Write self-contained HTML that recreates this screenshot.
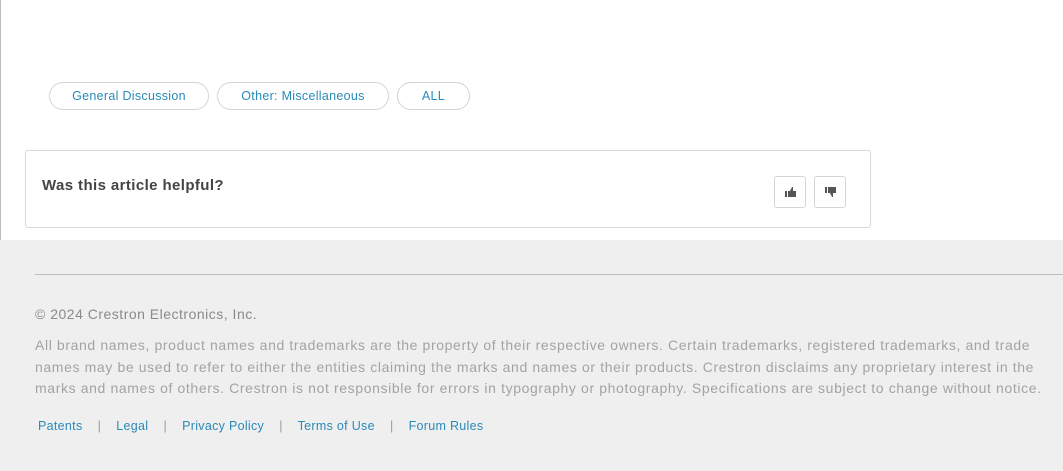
<!DOCTYPE html>
<html><head><style>
body{margin:0;width:1063px;height:471px;background:#fff;font-family:"Liberation Sans",sans-serif;position:relative;overflow:hidden}
.lb{position:absolute;left:0;top:0;width:1px;height:240px;background:#bbb}
.pill{position:absolute;top:82px;height:26px;border:1px solid #d4d4d4;border-radius:14px;color:#2a8ab8;font-size:12.5px;letter-spacing:0.3px;line-height:26px;text-align:center;box-sizing:content-box}
.card{position:absolute;left:25px;top:150px;width:844px;height:76px;border:1px solid #d8d8d8;border-radius:3px}
.card h{position:absolute;left:16px;top:26px;font-size:15px;letter-spacing:0.4px;font-weight:bold;color:#444}
.btn{position:absolute;top:25px;width:32px;height:32px;border:1px solid #d4d4d4;border-radius:3px;box-sizing:border-box}
.foot{position:absolute;left:0;top:240px;width:1063px;height:231px;background:#efefef}
.line{position:absolute;left:35px;top:34px;right:0;height:1px;background:#bdbdbd}
.copy{position:absolute;left:35px;top:66px;font-size:14px;letter-spacing:0.5px;color:#8a8a8a}
.txt{position:absolute;left:35px;top:95px;width:1022px;font-size:14px;letter-spacing:0.62px;line-height:21.5px;color:#a3a3a3}
.links{position:absolute;left:38px;top:179px;font-size:12.5px;letter-spacing:0.3px;color:#2a8ab8;white-space:pre}
.links span{color:#999}
</style></head><body>
<div class="lb"></div>
<div class="pill" style="left:49px;width:158px">General Discussion</div>
<div class="pill" style="left:217px;width:170px">Other: Miscellaneous</div>
<div class="pill" style="left:397px;width:71px">ALL</div>
<div class="card"><h>Was this article helpful?</h>
<div class="btn" style="left:748px"><svg width="30" height="30" viewBox="0 0 30 30"><rect x="10" y="14" width="2" height="6" fill="#555"/><path d="M13 14h2l2-4h1v4h3v6h-8z" fill="#555"/></svg></div>
<div class="btn" style="left:788px"><svg width="30" height="30" viewBox="0 0 30 30"><rect x="10" y="10" width="2" height="6" fill="#555"/><path d="M13 16h2l2 4h1v-4h3v-6h-8z" fill="#555"/></svg></div>
</div>
<div class="foot">
<div class="line"></div>
<div class="copy">© 2024 Crestron Electronics, Inc.</div>
<div class="txt">All brand names, product names and trademarks are the property of their respective owners. Certain trademarks, registered trademarks, and trade names may be used to refer to either the entities claiming the marks and names or their products. Crestron disclaims any proprietary interest in the marks and names of others. Crestron is not responsible for errors in typography or photography. Specifications are subject to change without notice.</div>
<div class="links">Patents    <span>|</span>    Legal    <span>|</span>    Privacy Policy    <span>|</span>    Terms of Use    <span>|</span>    Forum Rules</div>
</div>
</body></html>
